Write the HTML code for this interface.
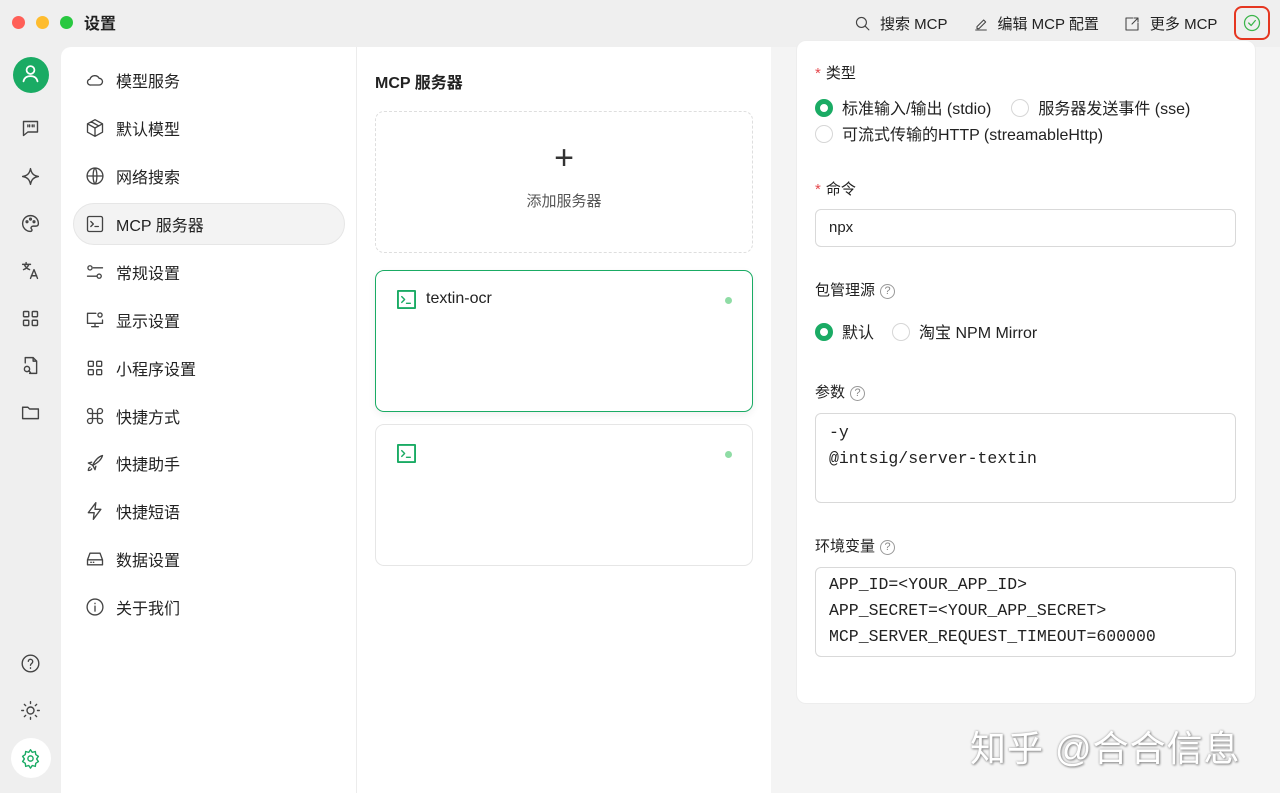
<!DOCTYPE html>
<html><head><meta charset="utf-8"><style>
*{box-sizing:border-box;margin:0;padding:0}
body{width:1280px;height:793px;overflow:hidden;background:#efefef;font-family:"Liberation Sans","Noto Sans CJK SC",sans-serif;color:#222;position:relative}
.abs{position:absolute}
.dot{width:13px;height:13px;border-radius:50%;top:16px}
svg{fill:none;stroke:#444;stroke-width:1.6;stroke-linecap:round;stroke-linejoin:round}
.rail svg{position:absolute;left:20px;width:21px;height:21px}
.menu .it{position:absolute;left:85px;height:40px;display:flex;align-items:center;font-size:16px;color:#222}
.menu .it svg{width:20px;height:20px;margin-right:11px;margin-left:0}
.lbl{font-size:15px;color:#222}
.req{color:#e5484d;margin-right:5px}
.radio{display:inline-block;width:18px;height:18px;border-radius:50%;border:1px solid #d6d6d6;background:#fff;vertical-align:-3px;margin-right:9px}
.radio.on{border:5px solid #1aab64}
.inp{position:absolute;left:815px;width:421px;border:1px solid #d9d9d9;border-radius:6px;background:#fff;font-family:"Liberation Mono","DejaVu Sans Mono",monospace;font-size:16.5px;padding:8px 13px;line-height:26px;color:#222}
.q{display:inline-block;width:15px;height:15px;border:1px solid #999;border-radius:50%;font-size:11px;line-height:13px;text-align:center;color:#888;vertical-align:1px;margin-left:5px}
.card{position:absolute;left:375px;width:378px;height:142px;border-radius:9px;background:#fff}
.term{position:absolute;left:21px;width:19px;height:19px}
.gd{position:absolute;right:20px;width:7px;height:7px;border-radius:50%;background:#8fdca5}
</style></head><body>
<div class="abs dot" style="left:12px;background:#ff5f57"></div>
<div class="abs dot" style="left:36px;background:#febc2e"></div>
<div class="abs dot" style="left:60px;background:#28c840"></div>
<div class="abs" style="left:84px;top:10px;font-size:16px;font-weight:bold">设置</div>
<div class="abs" style="left:854px;top:13px;font-size:15px;display:flex;align-items:center;gap:0">
<svg width="17" height="17" viewBox="0 0 24 24"><circle cx="10.5" cy="10.5" r="7"/><path d="M16 16l5 5"/></svg><span style="margin:0 25px 0 9px">搜索 MCP</span>
<svg width="16" height="16" viewBox="0 0 24 24"><path d="M4 21h16M6 16l10-10 3 3-10 10H6z"/></svg><span style="margin:0 25px 0 9px">编辑 MCP 配置</span>
<svg width="16" height="16" viewBox="0 0 24 24"><path d="M13 3H3v18h18V11M15 3h6v6M21 3l-9 9"/></svg><span style="margin-left:10px">更多 MCP</span>
</div>
<div class="abs" style="left:1234px;top:6px;width:36px;height:34px;border:2.5px solid #e53620;border-radius:8px"></div>
<svg class="abs" style="left:1242px;top:13px;stroke:#3bb54a;stroke-width:1.5" width="20" height="20" viewBox="0 0 24 24"><circle cx="12" cy="12" r="9"/><path d="M8 12l3 3 5-6"/></svg>

<div class="rail">
<div class="abs" style="left:13px;top:57px;width:36px;height:36px;border-radius:50%;background:#1aab64"></div>
<svg style="left:20px;top:63px;stroke:#fff;stroke-width:2" viewBox="0 0 24 24"><circle cx="12" cy="8" r="4.5"/><path d="M4 21c1-5 5-6 8-6s7 1 8 6"/></svg>
<svg style="top:118px" viewBox="0 0 24 24"><path d="M4 4h16v12H9l-5 4z"/><path d="M9 8v2M11 8v2M14 8v2M16 8v2"/></svg>
<svg style="top:166px" viewBox="0 0 24 24"><path d="M12 3c1 5 3 8 9 9-6 1-8 4-9 9-1-5-3-8-9-9 6-1 8-4 9-9z"/></svg>
<svg style="top:213px" viewBox="0 0 24 24"><path d="M12 3a9 9 0 100 18c2 0 2-2 1-3s0-3 2-3h3c2 0 3-1 3-3 0-5-4-9-9-9z"/><circle cx="8" cy="10" r="1"/><circle cx="12" cy="7" r="1"/><circle cx="16" cy="10" r="1"/></svg>
<svg style="top:260px" viewBox="0 0 24 24"><path d="M3 5h9M7 3v2M5 5c1 3 3 5 6 6M10 5c-1 3-3 5-6 6M12 21l4-10 4 10M13 18h6"/></svg>
<svg style="top:308px" viewBox="0 0 24 24"><rect x="4" y="4" width="6" height="6" rx="1"/><rect x="14" y="4" width="6" height="6" rx="1"/><rect x="4" y="14" width="6" height="6" rx="1"/><rect x="14" y="14" width="6" height="6" rx="1"/></svg>
<svg style="top:355px" viewBox="0 0 24 24"><path d="M6 9V3h9l4 4v14H11M15 3v4h4"/><circle cx="8" cy="16" r="3"/><path d="M10 18l2 2"/></svg>
<svg style="top:402px" viewBox="0 0 24 24"><path d="M3 6h6l2 2h10v11H3z"/></svg>
<svg style="top:653px" viewBox="0 0 24 24"><circle cx="12" cy="12" r="9.5"/><path d="M9.5 9.5a2.5 2.5 0 115 .5c0 2-2.5 2-2.5 4M12 17v.5"/></svg>
<svg style="top:700px" viewBox="0 0 24 24"><circle cx="12" cy="12" r="4"/><path d="M12 2v2M12 20v2M2 12h2M20 12h2M5 5l1.5 1.5M17.5 17.5L19 19M5 19l1.5-1.5M17.5 6.5L19 5"/></svg>
<div class="abs" style="left:11px;top:738px;width:40px;height:40px;border-radius:50%;background:#fff"></div>
<svg style="left:20px;top:748px;stroke:#1aab64" viewBox="0 0 24 24"><circle cx="12" cy="12" r="3"/><path d="M12 2l2 3 3.5-1 .5 3.5 3 2-2 3 2 3-3 2-.5 3.5L14 20l-2 3-2-3-3.5 1L6 17.5 3 15.5l2-3-2-3 3-2L6.5 4 10 5z"/></svg>
</div>

<div class="abs" style="left:61px;top:47px;width:1219px;height:746px;background:#fff;border-top-left-radius:10px"></div>
<div class="abs" style="left:356px;top:47px;width:1px;height:746px;background:#ececec"></div>
<div class="abs" style="left:771px;top:47px;width:509px;height:746px;background:#f4f4f4"></div>
<div class="abs" style="left:796px;top:40px;width:460px;height:664px;background:#fff;border-radius:10px;border:1px solid #ededed"></div>

<div class="menu">
<div class="abs" style="left:73px;top:203px;width:272px;height:42px;background:#f3f3f3;border:1px solid #e6e6e6;border-radius:21px"></div>
<div class="it" style="top:60px"><svg viewBox="0 0 24 24"><path d="M7 18h10a4 4 0 000-8 6 6 0 00-11 1 3.5 3.5 0 001 7z"/></svg>模型服务</div>
<div class="it" style="top:108px"><svg viewBox="0 0 24 24"><path d="M12 2l9 5v10l-9 5-9-5V7zM3 7l9 5 9-5M12 12v10M7.5 4.5l9 5"/></svg>默认模型</div>
<div class="it" style="top:156px"><svg viewBox="0 0 24 24"><circle cx="12" cy="12" r="9.5"/><path d="M2.5 12h19M12 2.5c3 3 3 16 0 19M12 2.5c-3 3-3 16 0 19"/></svg>网络搜索</div>
<div class="it" style="top:204px"><svg viewBox="0 0 24 24"><rect x="3" y="3" width="18" height="18" rx="2"/><path d="M7 9l3 3-3 3M12 15h4"/></svg>MCP 服务器</div>
<div class="it" style="top:252px"><svg viewBox="0 0 24 24"><circle cx="6" cy="7" r="2.5"/><circle cx="17" cy="17" r="2.5"/><path d="M10 7h11M3 17h11"/></svg>常规设置</div>
<div class="it" style="top:300px"><svg viewBox="0 0 24 24"><path d="M13 4H3v12h18v-4M12 16v4M8 20h8"/><circle cx="18" cy="6" r="2.5"/></svg>显示设置</div>
<div class="it" style="top:348px"><svg viewBox="0 0 24 24"><rect x="4" y="4" width="6" height="6" rx="1"/><rect x="14" y="4" width="6" height="6" rx="1"/><rect x="4" y="14" width="6" height="6" rx="1"/><rect x="14" y="14" width="6" height="6" rx="1"/></svg>小程序设置</div>
<div class="it" style="top:396px"><svg viewBox="0 0 24 24"><path d="M9 9V6a3 3 0 10-3 3h12a3 3 0 10-3-3v12a3 3 0 103-3H6a3 3 0 103 3z"/></svg>快捷方式</div>
<div class="it" style="top:443px"><svg viewBox="0 0 24 24"><path d="M9 15c4-8 8-11 12-12-1 4-4 8-12 12zM8 11l-4 1 4 2M13 16l-1 4-2-4M6 17c-2 1-2 4-2 4s3 0 4-2"/></svg>快捷助手</div>
<div class="it" style="top:491px"><svg viewBox="0 0 24 24"><path d="M13 2L4 14h7l-1 8 9-12h-7z"/></svg>快捷短语</div>
<div class="it" style="top:539px"><svg viewBox="0 0 24 24"><path d="M3 13l3-8h12l3 8v6H3zM3 13h18M7 16h.5M10 16h.5"/></svg>数据设置</div>
<div class="it" style="top:587px"><svg viewBox="0 0 24 24"><circle cx="12" cy="12" r="9.5"/><path d="M12 11v6M12 7.5v.5"/></svg>关于我们</div>
</div>

<div class="abs" style="left:375px;top:69px;font-size:16px;font-weight:bold">MCP 服务器</div>
<div class="abs" style="left:375px;top:111px;width:378px;height:142px;border:1px dashed #dedede;border-radius:9px;text-align:center">
<div style="font-size:34px;font-weight:200;color:#333;margin-top:26px;line-height:40px">+</div>
<div style="font-size:15px;color:#555;margin-top:12px">添加服务器</div></div>
<div class="card" style="top:270px;border:1.5px solid #1aab64;box-shadow:0 3px 8px rgba(0,0,0,.06)"><svg class="term" style="top:19px;stroke:#1aab64;stroke-width:2" viewBox="0 0 20 20"><rect x="1" y="1" width="18" height="18"/><path d="M5 7l3 3-3 3M10 14h4" stroke-width="1.5"/></svg><div class="abs" style="left:50px;top:19px;font-size:16px">textin-ocr</div><div class="gd" style="top:26px"></div></div>
<div class="card" style="top:424px;border:1px solid #e6e6e6"><svg class="term" style="top:19px;stroke:#1aab64;stroke-width:2" viewBox="0 0 20 20"><rect x="1" y="1" width="18" height="18"/><path d="M5 7l3 3-3 3M10 14h4" stroke-width="1.5"/></svg><div class="gd" style="top:26px"></div></div>

<div class="abs lbl" style="left:815px;top:62px"><span class="req">*</span>类型</div>
<div class="abs lbl" style="left:815px;top:95px;font-size:16px"><span class="radio on"></span>标准输入/输出 (stdio)<span class="radio" style="margin-left:20px"></span>服务器发送事件 (sse)</div>
<div class="abs lbl" style="left:815px;top:121px;font-size:16px"><span class="radio"></span>可流式传输的HTTP (streamableHttp)</div>
<div class="abs lbl" style="left:815px;top:178px"><span class="req">*</span>命令</div>
<div class="inp" style="top:209px;height:38px;padding-top:5px;font-family:'Liberation Sans',sans-serif;font-size:15px">npx</div>
<div class="abs lbl" style="left:815px;top:279px">包管理源<span class="q">?</span></div>
<div class="abs lbl" style="left:815px;top:319px;font-size:16px"><span class="radio on"></span>默认<span class="radio" style="margin-left:18px"></span>淘宝 NPM Mirror</div>
<div class="abs lbl" style="left:815px;top:381px">参数<span class="q">?</span></div>
<div class="inp" style="top:413px;height:90px;padding-top:6px">-y<br>@intsig/server-textin</div>
<div class="abs lbl" style="left:815px;top:535px">环境变量<span class="q">?</span></div>
<div class="inp" style="top:567px;height:90px;padding-top:4px">APP_ID=&lt;YOUR_APP_ID&gt;<br>APP_SECRET=&lt;YOUR_APP_SECRET&gt;<br>MCP_SERVER_REQUEST_TIMEOUT=600000</div>
<div class="abs" style="left:970px;top:720px;font-size:36px;color:#fff;text-shadow:0 0 2px #999,1px 1px 2px #888;letter-spacing:1px">知乎 @合合信息</div>
</body></html>
